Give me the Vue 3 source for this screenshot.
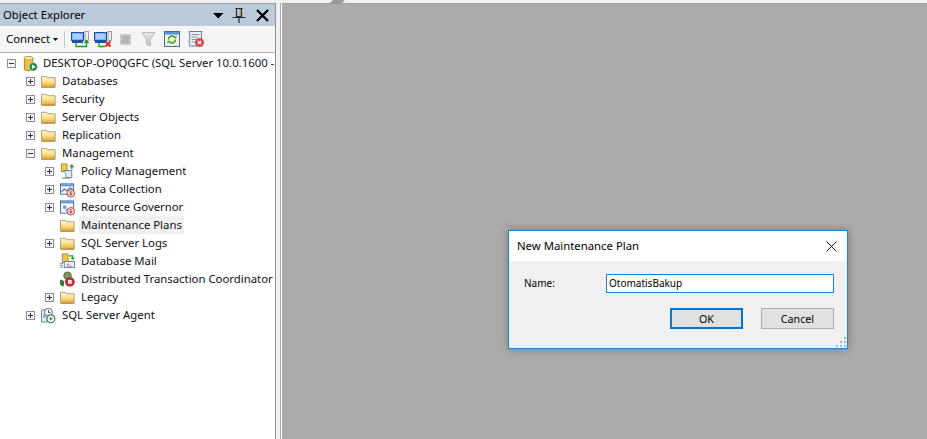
<script setup>
const rows = [
  { label: 'DESKTOP-OP0QGFC (SQL Server 10.0.1600 -', level: 0, exp: 'minus', icon: 'server' },
  { label: 'Databases', level: 1, exp: 'plus', icon: 'folder' },
  { label: 'Security', level: 1, exp: 'plus', icon: 'folder' },
  { label: 'Server Objects', level: 1, exp: 'plus', icon: 'folder' },
  { label: 'Replication', level: 1, exp: 'plus', icon: 'folder' },
  { label: 'Management', level: 1, exp: 'minus', icon: 'folder' },
  { label: 'Policy Management', level: 2, exp: 'plus', icon: 'policy' },
  { label: 'Data Collection', level: 2, exp: 'plus', icon: 'data' },
  { label: 'Resource Governor', level: 2, exp: 'plus', icon: 'governor' },
  { label: 'Maintenance Plans', level: 2, exp: '', icon: 'folder', selected: true },
  { label: 'SQL Server Logs', level: 2, exp: 'plus', icon: 'folder' },
  { label: 'Database Mail', level: 2, exp: '', icon: 'mail' },
  { label: 'Distributed Transaction Coordinator', level: 2, exp: '', icon: 'dtc' },
  { label: 'Legacy', level: 2, exp: 'plus', icon: 'folder' },
  { label: 'SQL Server Agent', level: 1, exp: 'plus', icon: 'agent' }
]
</script>

<template>
  <div class="app">
    <svg width="0" height="0" class="defs">
      <defs>
        <linearGradient id="fold" x1="0" y1="0" x2="0" y2="1">
          <stop offset="0" stop-color="#fff9dc" />
          <stop offset=".5" stop-color="#fbe08a" />
          <stop offset="1" stop-color="#e2a636" />
        </linearGradient>
        <linearGradient id="funnel" x1="0" y1="0" x2="0" y2="1">
          <stop offset="0" stop-color="#e4e4e4" />
          <stop offset="1" stop-color="#c4c4c4" />
        </linearGradient>
      </defs>
    </svg>
    <aside class="panel">
      <header class="title">
        <span class="title-text">Object Explorer</span>
        <svg class="title-icons" width="62" height="18" viewBox="0 0 62 18">
          <path d="M0 7h10.500L5.250 12.500z" fill="#000" />
          <path d="M22.500 2.500h7M23.500 2.500v8h5v-8M19.500 11.500h13M26 12v5" fill="none" stroke="#232a36" stroke-width="1.200" />
          <path d="M27.200 3v7" stroke="#b98a3a" stroke-width="1.200" />
          <path d="M44 4l11 11M55 4L44 15" stroke="#000" stroke-width="2.400" />
        </svg>
      </header>
      <div class="toolbar">
        <span class="connect">Connect</span>
        <svg class="caret" width="5" height="3" viewBox="0 0 5 3"><path d="M0 0h5L2.500 3z" fill="#000" /></svg>
        <span class="tool-sep"></span>
        <svg class="tool wide" width="18" height="18" viewBox="0 0 18 18">
          <rect x="0.500" y="2.500" width="12" height="8" fill="#7eb2ee" stroke="#1f4fa8" />
          <rect x="2" y="4" width="9" height="5" fill="#a9cdf5" />
          <rect x="1" y="11" width="11" height="2" fill="#1f4fa8" />
          <rect x="14" y="1.500" width="3.500" height="9" fill="#eee" stroke="#777" stroke-width=".7" />
          <path d="M5 13v3.500h10.500v-5M13.500 13l2-2.500 2 2.500" fill="none" stroke="#1d9a1d" stroke-width="1.300" />
        </svg>
        <svg class="tool wide" width="18" height="18" viewBox="0 0 18 18">
          <rect x="0.500" y="2.500" width="12" height="8" fill="#7eb2ee" stroke="#1f4fa8" />
          <rect x="2" y="4" width="9" height="5" fill="#a9cdf5" />
          <rect x="1" y="11" width="11" height="2" fill="#1f4fa8" />
          <rect x="14" y="1.500" width="3.500" height="9" fill="#eee" stroke="#777" stroke-width=".7" />
          <path d="M5 13v3.500h6" fill="none" stroke="#1d9a1d" stroke-width="1.300" />
          <path d="M11.500 11.500l5 5M16.500 11.500l-5 5" stroke="#e0241c" stroke-width="1.800" />
        </svg>
        <svg class="tool" width="16" height="16" viewBox="0 0 16 16"><rect x="3" y="3" width="11" height="11" rx="1" fill="#c8c8c8" /><rect x="5" y="5" width="7" height="7" fill="#b4b4b4" /></svg>
        <svg class="tool gap" width="16" height="16" viewBox="0 0 16 16"><path d="M2 1.500h13L10.500 8v7l-4-1.500V8z" fill="url(#funnel)" stroke="#bcbcbc" /></svg>
        <svg class="tool" width="16" height="16" viewBox="0 0 16 16">
          <rect x="0.500" y="0.500" width="15" height="15" fill="#f6f1dc" stroke="#3e6ca8" />
          <rect x="1" y="1" width="14" height="2.500" fill="#5c90d6" />
          <path d="M4.500 8.500a3.500 3.500 0 0 1 6-2.400M11.500 8.500a3.500 3.500 0 0 1-6 2.400" fill="none" stroke="#2c9a2c" stroke-width="1.500" />
          <path d="M9.500 7.200h3V4.500zM6.500 9.800h-3v2.700z" fill="#2c9a2c" />
        </svg>
        <svg class="tool" width="18" height="18" viewBox="0 0 18 18">
          <path d="M2 1.500h13c-1 1-1 2-.5 3.500v4L10 16H2c1-1 1-2.500 0-4 1-3 1-7 0-10.500z" fill="#eceff4" stroke="#6d7c8e" />
          <path d="M4.500 4.500h8M4.500 7h6M4.500 9.500h4M4.500 12h3" stroke="#6d7c8e" stroke-width=".8" />
          <circle cx="12.500" cy="12.500" r="4.500" fill="#d04a55" />
          <path d="M10.800 10.800l3.400 3.400M14.200 10.800l-3.400 3.400" stroke="#fff" stroke-width="1.200" />
        </svg>
      </div>
      <div class="tree">
        <div v-for="row in rows" :key="row.label" class="row" :class="'lvl' + row.level">
          <span class="exp" :class="{ none: !row.exp }">
            <svg v-if="row.exp" width="9" height="9" viewBox="0 0 9 9">
              <rect x="0.500" y="0.500" width="8" height="8" fill="#f4f4f6" stroke="#8e8f9a" />
              <path d="M2 4.500h5" stroke="#2f3550" />
              <path v-if="row.exp === 'plus'" d="M4.500 2v5" stroke="#2f3550" />
            </svg>
          </span>
          <span class="icon">
            <svg width="17" height="17" viewBox="0 0 17 17">
              <template v-if="row.icon === 'folder'">
                <path d="M0.500 4.500v-1.500h5.500l1 1.500h8v10h-14.500z" fill="url(#fold)" stroke="#a89a70" />
                <path d="M1 14.500h14" stroke="#b88a2c" />
              </template>
              <template v-else-if="row.icon === 'server'">
                <path d="M2.500 2.500c0-2 9-2 9 0v12c0 2-9 2-9 0z" fill="#eeb94c" stroke="#a87e28" />
                <ellipse cx="7" cy="2.500" rx="4" ry="1.300" fill="#fbeec0" />
                <circle cx="12" cy="12" r="4.500" fill="#1e8a44" stroke="#fff" stroke-width=".6" />
                <path d="M10.500 9.500l4 2.500-4 2.500z" fill="#fff" />
              </template>
              <template v-else-if="row.icon === 'policy'">
                <rect x="1.500" y="0.500" width="6" height="8" fill="#eec65e" stroke="#a8853a" />
                <path d="M12.500 6V2M10.500 4l2-2.500 2 2.500" fill="none" stroke="#2b9a2b" stroke-width="1.300" />
                <path d="M4 7.500h9c-1 1-1 2-.5 3v4.500H5.500c1-1 1-2 .5-3 0-1.500 0-3-2-4.500z" fill="#e4ecf4" stroke="#6a7f92" />
                <path d="M2 15.500h9" stroke="#6a7f92" />
              </template>
              <template v-else-if="row.icon === 'data'">
                <rect x="0.500" y="2.500" width="14" height="11" fill="#f4f8fc" stroke="#3d6ea8" />
                <rect x="1" y="3" width="13" height="2" fill="#5c90d6" />
                <path d="M1.500 11l3-3 3 2 3-3.500 3 2" fill="none" stroke="#3d6ea8" stroke-width="1.100" />
                <circle cx="11.500" cy="12.500" r="4" fill="#f2dcdc" stroke="#b53a44" />
                <path d="M11.500 10v4M10 12.800l1.500 1.500 1.500-1.500" fill="none" stroke="#a5202a" />
              </template>
              <template v-else-if="row.icon === 'governor'">
                <rect x="0.500" y="1.500" width="14" height="13" fill="#f4f8fc" stroke="#3d6ea8" />
                <rect x="1" y="2" width="13" height="2" fill="#5c90d6" />
                <circle cx="5" cy="8" r="2" fill="#6fa0d8" />
                <path d="M6 11h4" stroke="#6fa0d8" stroke-width="2" />
                <circle cx="11.500" cy="12.500" r="4" fill="#f2dcdc" stroke="#b53a44" />
                <path d="M11.500 10v4M10 12.800l1.500 1.500 1.500-1.500" fill="none" stroke="#a5202a" />
              </template>
              <template v-else-if="row.icon === 'mail'">
                <rect x="2.500" y="0.500" width="6" height="9" fill="#eec65e" stroke="#a8853a" />
                <path d="M9.500 2.500h4v3M12 4.500l1.500 1.500 1.500-1.500" fill="none" stroke="#2b9a2b" stroke-width="1.200" />
                <rect x="4.500" y="8.500" width="11" height="6.500" fill="#eef3fa" stroke="#5e7fa8" />
                <path d="M7 11.500h3M7 13.500h6" stroke="#c24848" stroke-width=".8" />
                <path d="M0 10.500h3M0 12.500h3M0 14.500h3" stroke="#5e7fa8" />
              </template>
              <template v-else-if="row.icon === 'dtc'">
                <circle cx="8" cy="4.500" r="4" fill="#7d9a5c" stroke="#4f6a34" />
                <path d="M0.500 9l3 1v5.500l-3-1.500zM3.500 14.500c-1-1-1-3 1-4" fill="#2d8a3a" stroke="#1e6a2a" stroke-width=".8" />
                <circle cx="10.500" cy="11" r="5.200" fill="#b8323c" />
                <rect x="8.500" y="9" width="4" height="4" fill="#f4e8e8" />
              </template>
              <template v-else-if="row.icon === 'agent'">
                <path d="M0.500 2.500h6v13h-6z" fill="#e2ecf6" stroke="#5f7fa4" />
                <circle cx="8" cy="5" r="4.200" fill="#f4f4f4" stroke="#606878" />
                <path d="M8 2.800v2.500h2" fill="none" stroke="#404858" />
                <path d="M2 8h3M2 10h3" stroke="#5f7fa4" />
                <circle cx="10.500" cy="12" r="4.200" fill="#fff" stroke="#2a8a3e" stroke-width="1.200" />
                <path d="M9.200 10l3.500 2-3.500 2z" fill="#2a8a3e" />
              </template>
            </svg>
          </span>
          <span class="label" :class="{ selected: row.selected }">{{ row.label }}</span>
        </div>
      </div>
    </aside>
    <div class="split"></div>
    <main class="workspace">
      <section class="dialog">
        <div class="dlg-title">
          <span class="dlg-text">New Maintenance Plan</span>
          <svg width="11" height="11" viewBox="0 0 11 11"><path d="M.5.500l10 10M10.500.500l-10 10" stroke="#111" stroke-width="1" /></svg>
        </div>
        <div class="dlg-body">
          <div class="field">
            <label class="field-label">Name:</label>
            <div class="input">OtomatisBakup</div>
          </div>
          <div class="buttons">
            <button class="btn primary">OK</button>
            <button class="btn">Cancel</button>
          </div>
          <svg class="grip" width="11" height="11" viewBox="0 0 11 11">
            <path d="M8 0h2v2H8zM4 4h2v2H4zM8 4h2v2H8zM0 8h2v2H0zM4 8h2v2H4zM8 8h2v2H8z" fill="#b4b4b4" />
          </svg>
        </div>
      </section>
    </main>
    <svg class="top-mark" width="16" height="4" viewBox="0 0 16 4"><path d="M4 0h12l-4 4H0z" fill="#9a9a9a" /></svg>
  </div>
</template>

<style scoped>
.app {
  position: relative;
  width: 927px;
  height: 439px;
  display: flex;
  box-sizing: border-box;
  padding-top: 3px;
  background: #f0f0f0;
  overflow: hidden;
  font-family: "Noto Sans", "Liberation Sans", sans-serif;
  font-size: 11.35px;
  color: #000;
}
.defs { position: absolute; }
.top-mark {
  position: absolute;
  left: 329px;
  top: 0;
}
.panel {
  width: 276px;
  flex: none;
  box-sizing: border-box;
  border-right: 1px solid #8f8f8f;
  border-top: 1px solid #a0a0a0;
  display: flex;
  flex-direction: column;
  background: #fff;
}
.title {
  height: 22px;
  flex: none;
  display: flex;
  align-items: center;
  justify-content: space-between;
  background: #bccbdb;
  padding-left: 3px;
}
.title-text { line-height: 22px; }
.toolbar {
  height: 26px;
  flex: none;
  display: flex;
  align-items: center;
  background: #f5f5f5;
  border-bottom: 1px solid #b4b4b4;
  padding-left: 6px;
}
.connect { line-height: 16px; }
.caret { margin-left: 3px; }
.tool-sep {
  width: 1px;
  height: 17px;
  background: #c8c8c8;
  margin: 0 6px 0 6px;
}
.tool { margin-right: 7px; flex: none; }
.tool.wide { margin-right: 5px; }
.tool.gap { margin-right: 8px; }
.tree {
  flex: 1;
  padding-top: 1px;
  min-height: 0;
}
.row {
  height: 18px;
  display: flex;
  align-items: center;
  white-space: nowrap;
  overflow: hidden;
}
.lvl0 { padding-left: 7px; }
.lvl1 { padding-left: 26px; }
.lvl2 { padding-left: 45px; }
.exp {
  width: 9px;
  height: 9px;
  flex: none;
  display: flex;
}
.icon {
  width: 16px;
  height: 17px;
  flex: none;
  margin-left: 6px;
  display: flex;
}
.label {
  margin-left: 3px;
  padding: 0 2px;
  line-height: 18px;
  color: #101020;
}
.selected { background: #f0f0f0; }
.split {
  width: 6px;
  flex: none;
  background: #f0f0f0;
  border-right: 1px solid #fafafa;
  box-shadow: inset -1px 0 0 #a8a8a8;
  box-sizing: border-box;
}
.workspace {
  flex: 1;
  position: relative;
  background: #ababab;
  border-top: 1px solid #a0a0a0;
}
.dialog {
  position: absolute;
  left: 226px;
  top: 226px;
  width: 340px;
  height: 119px;
  box-sizing: border-box;
  border: 1px solid #1883d7;
  box-shadow: 0 0 8px rgba(0, 0, 0, .3);
  display: flex;
  flex-direction: column;
  background: #f0f0f0;
}
.dlg-title {
  height: 30px;
  flex: none;
  background: #fff;
  display: flex;
  align-items: center;
  justify-content: space-between;
  padding: 0 10px 0 8px;
}
.dlg-text { margin-top: -2px; }
.dlg-body {
  flex: 1;
  position: relative;
  padding: 12px 13px 0 15px;
}
.field {
  display: flex;
  align-items: center;
  height: 20px;
  font-size: 10px;
}
.field-label { width: 82px; flex: none; }
.input {
  width: 230px;
  height: 19px;
  box-sizing: border-box;
  border: 1px solid #1883d7;
  background: #fff;
  line-height: 17px;
  padding-left: 2px;
}
.buttons {
  display: flex;
  justify-content: flex-end;
  gap: 18px;
  margin-top: 15px;
}
.btn {
  width: 73px;
  height: 21px;
  box-sizing: border-box;
  border: 1px solid #adadad;
  background: #e1e1e1;
  font: inherit;
  font-size: 10.700px;
  padding: 0;
  color: #000;
}
.btn.primary { border: 2px solid #0078d7; }
.grip {
  position: absolute;
  right: 0;
  bottom: 0;
}
</style>
